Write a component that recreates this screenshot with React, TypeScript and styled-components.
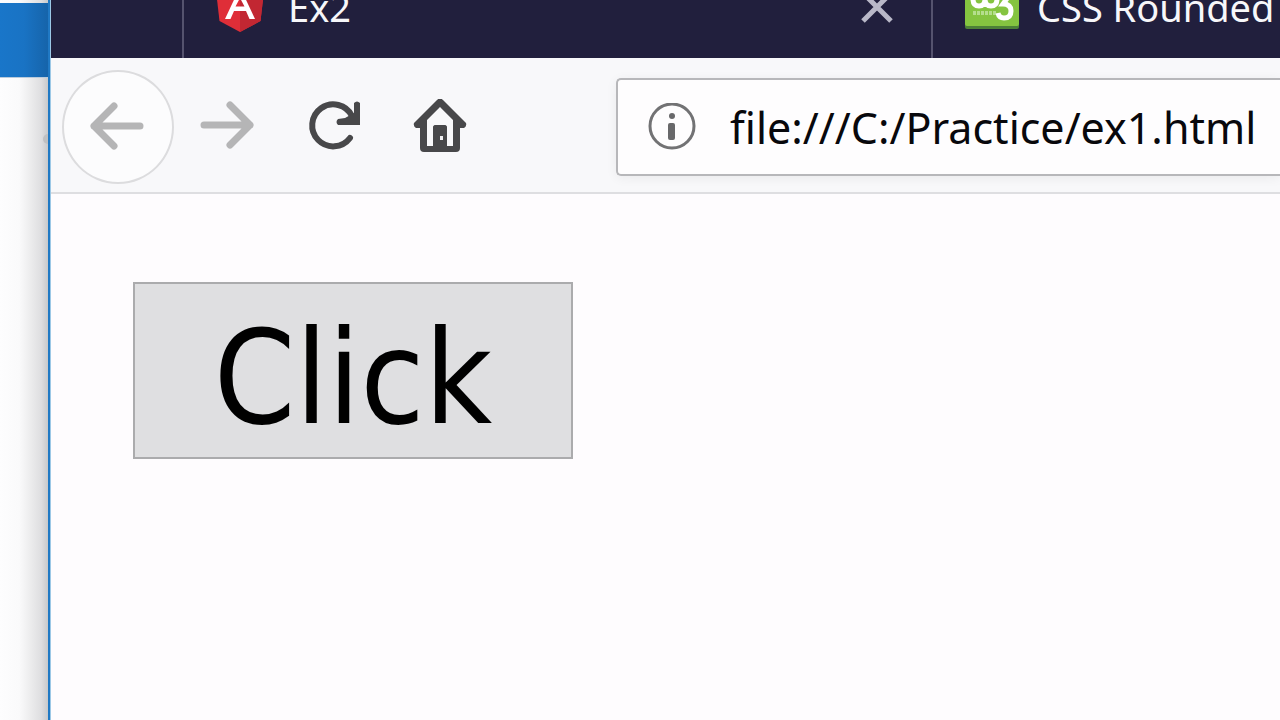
import React from "react";
import styled, { createGlobalStyle } from "styled-components";

const uiFont = `"Noto Sans", "Open Sans", sans-serif`;

const GlobalStyle = createGlobalStyle`
  * { box-sizing: border-box; }
  body { margin: 0; background: #fefcfe; font-family: ${uiFont}; }
`;

const Desktop = styled.div`
  display: flex;
  min-height: 100vh;
  overflow: hidden;
`;

const Backdrop = styled.aside`
  display: flex;
  flex-direction: column;
  flex: 0 0 48px;
  padding-top: 3px;
  background: linear-gradient(to right, #fdfdfe 0%, #fafafb 40%, #ededee 62%, #dedee0 86%, #c8c9cb 100%);
`;

const BackdropTitle = styled.div`
  height: 75px;
  border-bottom: 1px solid #b9cbdc;
  background: linear-gradient(to right, #1976c9 0%, #1973c4 50%, #1664aa 100%);
`;

const BackdropHandle = styled.div`
  align-self: flex-end;
  width: 5px;
  height: 10px;
  margin-top: 56px;
  border-radius: 5px 0 0 5px;
  background: #bfc0c2;
`;

const BrowserWindow = styled.div`
  display: flex;
  flex: 1;
  flex-direction: column;
  min-width: 0;
  border-left: 2px solid #2079c4;
  box-shadow: inset 1px 0 0 #9cc8e6;
  padding-left: 1px;
`;

const TabStrip = styled.div`
  display: flex;
  align-items: flex-end;
  height: 58px;
  overflow: hidden;
  background: #211f3d;
`;

const Tab = styled.div<{ $width: number }>`
  display: flex;
  align-items: center;
  flex: 0 0 ${(p) => p.$width}px;
  height: 102px;
  padding: 0 32px;
  border-right: 2px solid #55536e;
  color: #f7f7fa;
  font-size: 38px;
  line-height: 52px;
  white-space: nowrap;
`;

const TabIcon = styled.span`
  display: flex;
  flex: 0 0 72px;
`;

const TabTitle = styled.span`
  flex: 1;
`;

const IconButton = styled.button`
  display: flex;
  align-items: center;
  justify-content: center;
  padding: 0;
  border: 0;
  background: transparent;
`;

const CloseButton = styled(IconButton)`
  width: 44px;
  height: 44px;
`;

const Toolbar = styled.div`
  display: flex;
  align-items: center;
  padding: 12px 0 8px 11px;
  border-bottom: 2px solid #dedee1;
  background: #f8f8fa;
  overflow: hidden;
`;

const BackButton = styled(IconButton)`
  flex: 0 0 112px;
  height: 114px;
  border: 2px solid #dcdcde;
  border-radius: 50%;
  background: #fcfcfd;
`;

const NavButton = styled(IconButton)`
  flex: 0 0 106px;
  height: 106px;
`;

const AddressBar = styled.label`
  display: flex;
  align-items: center;
  flex: 1;
  min-width: 0;
  height: 98px;
  margin-left: 124px;
  padding-left: 30px;
  border: 2px solid #b7b7ba;
  border-right: 0;
  border-radius: 5px 0 0 5px;
  background: #fefdfe;
  box-shadow: 0 2px 12px rgba(0, 0, 0, 0.06);
`;

const AddressInput = styled.input`
  flex: 1;
  min-width: 0;
  margin-left: 34px;
  padding: 2px 0 0;
  border: 0;
  outline: 0;
  background: transparent;
  color: #08080c;
  font: 43px/60px ${uiFont};
`;

const Page = styled.main`
  flex: 1;
  padding: 88px 82px;
  background: #fefcfe;
`;

const ClickButton = styled.button`
  min-width: 440px;
  height: 177px;
  padding: 14px 72px 0;
  border: 2px solid #ababad;
  background: #dfdfe1;
  color: #000;
  font: 130px/158px "DejaVu Sans Condensed", "Noto Sans", sans-serif;
`;

const AngularLogo = () => (
  <svg width="48" height="50" viewBox="0 0 48 50" aria-hidden="true">
    <path d="M24 0 48 8.600 44.500 39 24 50 3.500 39 0 8.600Z" fill="#df2e38" />
    <path d="M24 0 48 8.600 44.500 39 24 50Z" fill="#c22732" />
    <path
      d="M24 5 9 37h5.500l3.500-8h12l3.500 8H39Zm0 11 4.500 8.500h-9Z"
      fill="#fff"
      fillRule="evenodd"
    />
  </svg>
);

const SchoolsLogo = () => (
  <svg width="54" height="54" viewBox="0 0 54 54" aria-hidden="true">
    <rect width="54" height="49" rx="2" fill="#4d8137" />
    <rect width="54" height="46" rx="2" fill="#85c440" />
    <path
      d="M8 12v7q0 7 6 7t6-7v-7m0 7q0 7 6 7t6-7v-7"
      fill="none"
      stroke="#fff"
      strokeWidth="5"
    />
    <path d="M8 33h23" stroke="#b5de8c" strokeWidth="4" strokeDasharray="3 1" />
    <path
      d="M34 13h12l-8 11q8 0 8 7t-7 7q-5 0-6-5"
      fill="none"
      stroke="#fff"
      strokeWidth="5"
    />
  </svg>
);

const CloseIcon = () => (
  <svg width="32" height="32" viewBox="0 0 32 32" aria-hidden="true">
    <path d="M2 2 30 30M30 2 2 30" stroke="#b9b8c8" strokeWidth="5" />
  </svg>
);

const BackIcon = () => (
  <svg width="56" height="56" viewBox="0 0 56 56" aria-hidden="true">
    <path
      d="M50 27H4M24 7 4 27l20 20"
      fill="none"
      stroke="#b5b5b6"
      strokeWidth="7"
      strokeLinecap="round"
      strokeLinejoin="round"
    />
  </svg>
);

const ForwardIcon = () => (
  <svg width="56" height="56" viewBox="0 0 56 56" aria-hidden="true">
    <path
      d="M5 26h46M31 6l20 20-20 20"
      fill="none"
      stroke="#b5b5b6"
      strokeWidth="7"
      strokeLinecap="round"
      strokeLinejoin="round"
    />
  </svg>
);

const ReloadIcon = () => (
  <svg width="56" height="56" viewBox="0 0 56 56" aria-hidden="true">
    <path
      d="M45 39A21 21 0 1 1 47 17"
      fill="none"
      stroke="#48484a"
      strokeWidth="6"
      strokeLinecap="round"
    />
    <path d="M49 4q3-3 6 0v22H33q-3-3 0-6l7-1 9-5Z" fill="#48484a" />
  </svg>
);

const HomeIcon = () => (
  <svg width="56" height="56" viewBox="0 0 56 56" aria-hidden="true">
    <path
      d="M26 1q3-3 6 0l23 23q1 3-2 5h-4v20q0 4-4 4H13q-4 0-4-4V29H5q-3-2-2-5ZM29 8 16 21v26h6V29q0-3 3-3h8q3 0 3 3v18h6V21Z"
      fill="#48484a"
      fillRule="evenodd"
    />
    <path d="M22 29q0-3 3-3h8q3 0 3 3v20H22Z" fill="#48484a" />
    <rect x="29" y="37" width="3" height="4" fill="#f0f0f2" />
  </svg>
);

const InfoIcon = () => (
  <svg width="48" height="48" viewBox="0 0 48 48" aria-hidden="true">
    <circle cx="24" cy="23" r="22" fill="none" stroke="#727274" strokeWidth="3" />
    <circle cx="24" cy="13" r="3" fill="#68686a" />
    <rect x="20" y="20" width="7" height="17" rx="2" fill="#68686a" />
  </svg>
);

export default function App() {
  return (
    <Desktop>
      <GlobalStyle />
      <Backdrop>
        <BackdropTitle />
        <BackdropHandle />
      </Backdrop>
      <BrowserWindow>
        <TabStrip>
          <Tab $width={133} />
          <Tab $width={749}>
            <TabIcon>
              <AngularLogo />
            </TabIcon>
            <TabTitle>Ex2</TabTitle>
            <CloseButton aria-label="Close tab">
              <CloseIcon />
            </CloseButton>
          </Tab>
          <Tab $width={749}>
            <TabIcon>
              <SchoolsLogo />
            </TabIcon>
            <TabTitle>CSS Rounded</TabTitle>
          </Tab>
        </TabStrip>
        <Toolbar>
          <BackButton aria-label="Back">
            <BackIcon />
          </BackButton>
          <NavButton aria-label="Forward">
            <ForwardIcon />
          </NavButton>
          <NavButton aria-label="Reload">
            <ReloadIcon />
          </NavButton>
          <NavButton aria-label="Home">
            <HomeIcon />
          </NavButton>
          <AddressBar>
            <InfoIcon />
            <AddressInput
              type="text"
              aria-label="Address"
              defaultValue="file:///C:/Practice/ex1.html"
            />
          </AddressBar>
        </Toolbar>
        <Page>
          <ClickButton>Click</ClickButton>
        </Page>
      </BrowserWindow>
    </Desktop>
  );
}
